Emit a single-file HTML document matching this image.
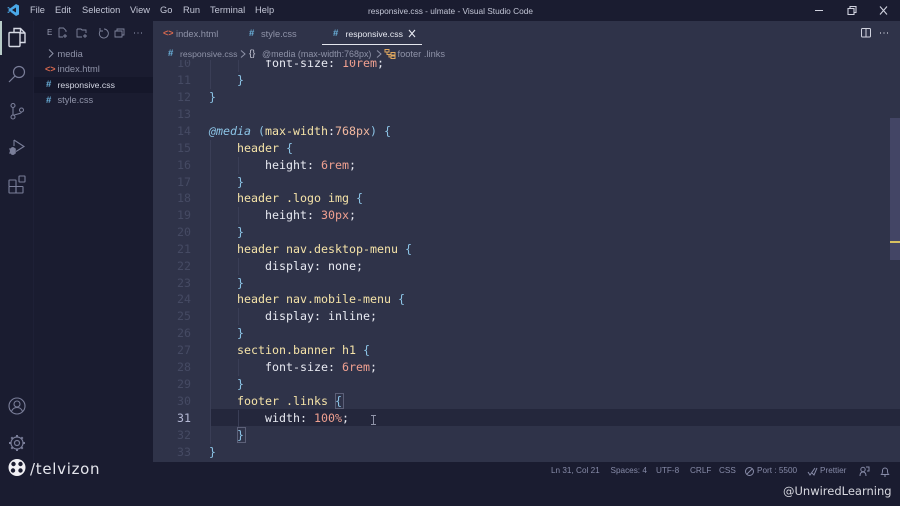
<!DOCTYPE html>
<html><head><meta charset="utf-8"><style>
html,body{margin:0;padding:0;width:900px;height:506px;overflow:hidden;background:#1a1c30}
*{box-sizing:border-box}
.a{position:absolute;white-space:pre}
body{font-family:"Liberation Sans",sans-serif;position:relative;filter:blur(.3px)}
.m{font-size:9.3px;color:#c3c6d6;top:5px}
.t{font-size:9.3px;color:#8f93a8}
.ln{position:absolute;left:0;width:38px;text-align:right;font:11.6px/17px "DejaVu Sans Mono",monospace;color:#454a63}
.c{position:absolute;left:56px;font:11.63px/17px "DejaVu Sans Mono",monospace;color:#e8eaf2;white-space:pre}
.y{color:#f5e3a8}.b{color:#8cc4e6}.r{color:#f0a090}.p{color:#f2b8a0}
.s{font-size:8.2px;color:#878ba8;top:466px}
svg{position:absolute;fill:none}
.g{position:absolute;width:1px;background:#3a3e56}
</style></head><body>
<div class="a" style="left:0;top:0;width:900px;height:21px;background:#1a1c30"></div>
<div class="a" style="left:153px;top:21px;width:747px;height:441px;background:#2f3349"></div>
<div class="a" style="left:33px;top:21px;width:1px;height:441px;background:#1e2036"></div>
<div class="a" style="left:34px;top:77px;width:119px;height:16px;background:#15172a"></div>
<div class="a" style="left:0;top:21px;width:2px;height:34px;background:#b8ccc8"></div>

<svg style="left:6px;top:3px" width="14" height="14" viewBox="0 0 14 14"><path d="M10 1 L13 2.5 V11.5 L10 13 L2 7 L10 1Z M10 4.5 L6 7 L10 9.5Z M1 5 L2.5 4 L5 6 M1 9 L2.5 10 L5 8" fill="#4aa8e8"/></svg>
<span class="a m" style="left:30px">File</span><span class="a m" style="left:55px">Edit</span><span class="a m" style="left:82px">Selection</span><span class="a m" style="left:130px">View</span><span class="a m" style="left:160px">Go</span><span class="a m" style="left:183px">Run</span><span class="a m" style="left:210px">Terminal</span><span class="a m" style="left:255px">Help</span>
<span class="a m" style="left:368px;font-size:8.3px;top:5.500px">responsive.css - ulmate - Visual Studio Code</span>
<svg style="left:815px;top:5px" width="80" height="11" viewBox="0 0 80 11" stroke="#d0d2de"><path d="M0 5.5H8"/><path d="M33 3.5h6v6h-6zM35 3.5V1.5h6v6h-2" stroke-width="1.1"/><path d="M65 1.5l7 8M72 1.5l-7 8" stroke-width="1.1"/></svg>

<svg style="left:7px;top:27px" width="20" height="21" viewBox="0 0 20 21" stroke="#d6d9e4" stroke-width="1.4"><path d="M7 5V1.5h6.5L18 6v9.500h-5M13.500 1.500V6H18"/><rect x="2" y="5.500" width="11" height="14" rx="1"/></svg>
<svg style="left:8px;top:65px" width="18" height="18" viewBox="0 0 18 18" stroke="#7a7e99" stroke-width="1.2"><circle cx="11" cy="7" r="5.500"/><path d="M7 11l-6 6"/></svg>
<svg style="left:9px;top:102px" width="16" height="18" viewBox="0 0 16 18" stroke="#7a7e99" stroke-width="1.1"><circle cx="4" cy="3.500" r="2"/><circle cx="4" cy="15" r="2"/><circle cx="12.500" cy="8" r="2"/><path d="M4 5.500V13M12.500 10c0 2-6 2-8 3.500"/></svg>
<svg style="left:8px;top:138px" width="18" height="19" viewBox="0 0 18 19" stroke="#7a7e99" stroke-width="1.1"><path d="M6 2l10 6.500L8 13.500M6 2v6"/><ellipse cx="4.800" cy="13" rx="2.500" ry="3.500" fill="#7a7e99"/><path d="M1 11h7M1 15h7"/></svg>
<svg style="left:8px;top:175px" width="18" height="19" viewBox="0 0 18 19" stroke="#7a7e99" stroke-width="1.1"><rect x="11" y="1" width="6" height="6" rx=".5"/><rect x="1" y="5" width="7" height="6.500" rx=".5"/><rect x="1" y="11.500" width="7" height="6.500" rx=".5"/><rect x="8" y="11.500" width="7" height="6.500" rx=".5"/></svg>
<svg style="left:8px;top:397px" width="18" height="18" viewBox="0 0 18 18" stroke="#7a7e99" stroke-width="1.1"><circle cx="9" cy="9" r="8"/><circle cx="9" cy="7" r="3"/><path d="M3.500 14.500c1-3 3.500-4 5.500-4s4.500 1 5.500 4"/></svg>
<svg style="left:8px;top:434px" width="18" height="18" viewBox="0 0 18 18" stroke="#7a7e99" stroke-width="1.2"><circle cx="9" cy="9" r="2.500"/><circle cx="9" cy="9" r="6"/><path d="M9 1v2.500M9 14.500V17M1 9h2.500M14.500 9H17M3.300 3.300l1.800 1.800M12.900 12.900l1.800 1.800M14.700 3.300l-1.800 1.800M5.100 12.900l-1.800 1.800" stroke-width="2"/></svg>

<span class="a" style="left:47px;top:28px;font-size:8px;color:#9a9db2">E</span>
<svg style="left:58px;top:27px" width="90" height="12" viewBox="0 0 90 12" stroke="#7f849c" stroke-width=".9"><path d="M1 1h4.500L8 3.500V5M1 1v9h4M7 7v4M5 9h4"/><path d="M19 2h4l1 1h4v3M19 2v8h5M27 7v4M25 9h4"/><path d="M46 2a4.500 4.500 0 1 1-3.500 1.500M42 1v3h3"/><path d="M57 4h7v6h-7zM59 4V2h7v6h-2"/><path d="M76 6h1M79.500 6h1M83 6h1" stroke-width="1.200"/></svg>

<svg style="left:47px;top:49px" width="8" height="9" viewBox="0 0 8 9" stroke="#8f93a8"><path d="M2 .5l4 4-4 4"/></svg>
<span class="a t" style="left:57.500px;top:48.500px">media</span>
<span class="a" style="left:45px;top:64px;font-size:9px;color:#d9694f;font-weight:bold">&lt;&gt;</span>
<span class="a t" style="left:57.500px;top:64px">index.html</span>
<span class="a" style="left:46px;top:79px;font-size:9.500px;color:#6cb4de;font-weight:bold">#</span>
<span class="a" style="left:57.500px;top:79.500px;font-size:8.700px;color:#d4d7e4">responsive.css</span>
<span class="a" style="left:46px;top:95px;font-size:9.500px;color:#6cb4de;font-weight:bold">#</span>
<span class="a t" style="left:57.500px;top:95px">style.css</span>

<span class="a" style="left:163px;top:28px;font-size:9px;color:#d9694f;font-weight:bold">&lt;&gt;</span>
<span class="a t" style="left:176px;top:28.500px">index.html</span>
<span class="a" style="left:249px;top:28px;font-size:9.500px;color:#6cb4de;font-weight:bold">#</span>
<span class="a t" style="left:261px;top:28.500px">style.css</span>
<span class="a" style="left:333px;top:28px;font-size:9.500px;color:#6cb4de;font-weight:bold">#</span>
<span class="a" style="left:345.500px;top:28.500px;font-size:8.700px;color:#e8eaf2">responsive.css</span>
<svg style="left:408px;top:29px" width="8" height="9" viewBox="0 0 8 9" stroke="#e8eaf2" stroke-width="1.100"><path d="M1 1l6 7M7 1l-6 7"/></svg>
<div class="a" style="left:322px;top:44px;width:100px;height:1px;background:#e4e6ee"></div>
<svg style="left:860px;top:27px" width="30" height="12" viewBox="0 0 30 12" stroke="#d0d2de"><rect x="1.500" y="1.500" width="9" height="8.500" rx="1"/><path d="M6 1.500V10"/><path d="M20 6h1M23.500 6h1M27 6h1" stroke-width="1.200"/></svg>

<span class="a" style="left:168px;top:48px;font-size:9.500px;color:#6cb4de;font-weight:bold">#</span>
<span class="a t" style="left:180px;top:48.500px;font-size:8.700px">responsive.css</span>
<svg style="left:240px;top:50px" width="6" height="8" viewBox="0 0 6 8" stroke="#8f93a8"><path d="M1 .5l4 3.500-4 3.500"/></svg>
<span class="a" style="left:249px;top:48px;font-size:9.500px;color:#c8cad8">{}</span>
<span class="a t" style="left:262px;top:48.500px;font-size:8.950px">@media (max-width:768px)</span>
<svg style="left:376px;top:50px" width="6" height="8" viewBox="0 0 6 8" stroke="#8f93a8"><path d="M1 .5l4 3.500-4 3.500"/></svg>
<svg style="left:384px;top:48px" width="12" height="11" viewBox="0 0 12 11" stroke="#e0a860"><path d="M1 1.500h4v2.500H1zM7 4.500h4V7H7zM7 8h4v2.500H7zM3 4v2.500h4M5 6.500V9h2"/></svg>
<span class="a t" style="left:397.500px;top:48.500px">footer .links</span>

<div style="position:absolute;left:153px;top:60px;width:747px;height:402px;overflow:hidden">
<div style="position:absolute;left:0;top:-60px;width:747px;height:522px">
<div class="a" style="left:57px;top:409px;width:690px;height:17px;background:#24273c"></div>
<div class="g" style="left:57px;top:140px;height:304px"></div>
<div class="g" style="left:85px;top:157px;height:17px"></div>
<div class="g" style="left:85px;top:207px;height:17px"></div>
<div class="g" style="left:85px;top:258px;height:17px"></div>
<div class="g" style="left:85px;top:308px;height:17px"></div>
<div class="g" style="left:85px;top:359px;height:17px"></div>
<div class="g" style="left:85px;top:410px;height:17px"></div>
<div class="g" style="left:85px;top:55px;height:17px"></div>
<div class="g" style="left:57px;top:55px;height:34px"></div>

<div class="ln" style="top:55px">10</div><div class="ln" style="top:72px">11</div><div class="ln" style="top:89px">12</div><div class="ln" style="top:106px">13</div><div class="ln" style="top:123px">14</div><div class="ln" style="top:140px">15</div><div class="ln" style="top:157px">16</div><div class="ln" style="top:174px">17</div><div class="ln" style="top:190px">18</div><div class="ln" style="top:207px">19</div><div class="ln" style="top:224px">20</div><div class="ln" style="top:241px">21</div><div class="ln" style="top:258px">22</div><div class="ln" style="top:275px">23</div><div class="ln" style="top:291px">24</div><div class="ln" style="top:308px">25</div><div class="ln" style="top:325px">26</div><div class="ln" style="top:342px">27</div><div class="ln" style="top:359px">28</div><div class="ln" style="top:376px">29</div><div class="ln" style="top:393px">30</div><div class="ln" style="top:410px;color:#b4b8d4">31</div><div class="ln" style="top:427px">32</div><div class="ln" style="top:444px">33</div>

<div class="c" style="top:55px">        font-size: <span class="r">10rem</span>;</div>
<div class="c" style="top:72px">    <span class="b">}</span></div>
<div class="c" style="top:89px"><span class="b">}</span></div>
<div class="c" style="top:123px"><i class="b">@media</i> <span class="b">(</span><span class="y">max-width</span>:<span class="p">768px</span><span class="b">)</span> <span class="b">{</span></div>
<div class="c" style="top:140px">    <span class="y">header</span> <span class="b">{</span></div>
<div class="c" style="top:157px">        height: <span class="r">6rem</span>;</div>
<div class="c" style="top:174px">    <span class="b">}</span></div>
<div class="c" style="top:190px">    <span class="y">header .logo img</span> <span class="b">{</span></div>
<div class="c" style="top:207px">        height: <span class="r">30px</span>;</div>
<div class="c" style="top:224px">    <span class="b">}</span></div>
<div class="c" style="top:241px">    <span class="y">header nav.desktop-menu</span> <span class="b">{</span></div>
<div class="c" style="top:258px">        display: none;</div>
<div class="c" style="top:275px">    <span class="b">}</span></div>
<div class="c" style="top:291px">    <span class="y">header nav.mobile-menu</span> <span class="b">{</span></div>
<div class="c" style="top:308px">        display: inline;</div>
<div class="c" style="top:325px">    <span class="b">}</span></div>
<div class="c" style="top:342px">    <span class="y">section.banner h1</span> <span class="b">{</span></div>
<div class="c" style="top:359px">        font-size: <span class="r">6rem</span>;</div>
<div class="c" style="top:376px">    <span class="b">}</span></div>
<div class="c" style="top:393px">    <span class="y">footer .links</span> <span class="b">{</span></div>
<div class="c" style="top:410px">        width: <span class="r">100%</span>;</div>
<div class="c" style="top:427px">    <span class="b">}</span></div>
<div class="c" style="top:444px"><span class="b">}</span></div>
<div class="a" style="left:182px;top:393px;width:9px;height:16px;border:1px solid #5c6078"></div>
<div class="a" style="left:84px;top:427px;width:9px;height:16px;border:1px solid #5c6078"></div>
</div></div>

<div class="a" style="left:890px;top:118px;width:10px;height:142px;background:#434565"></div>
<div class="a" style="left:890px;top:241px;width:10px;height:2px;background:#d8c060"></div>
<svg style="left:370px;top:415px" width="7" height="10" viewBox="0 0 7 10" stroke="#8f93a8"><path d="M1 .5h5M1 9.500h5M3.500 .5v9"/></svg>

<span class="a s" style="left:551px">Ln 31, Col 21</span><span class="a s" style="left:610.500px">Spaces: 4</span><span class="a s" style="left:656px">UTF-8</span><span class="a s" style="left:690px">CRLF</span><span class="a s" style="left:719px">CSS</span>
<svg style="left:744px;top:466px" width="11" height="11" viewBox="0 0 11 11" stroke="#878ba8"><circle cx="5.500" cy="5.500" r="4"/><path d="M2.500 8.500l6-6"/></svg>
<span class="a s" style="left:757px">Port : 5500</span>
<svg style="left:807px;top:467px" width="11" height="9" viewBox="0 0 11 9" stroke="#878ba8"><path d="M1 5l2 3 5-7M5 6l2 2 3-7"/></svg>
<span class="a s" style="left:820px">Prettier</span>
<svg style="left:859px;top:466px" width="11" height="11" viewBox="0 0 11 11" stroke="#878ba8"><circle cx="4" cy="3.500" r="2.200"/><path d="M1 10c0-3 1.500-4 3-4s3 1 3 4M7 1h3v4H8"/></svg>
<svg style="left:880px;top:466px" width="10" height="11" viewBox="0 0 10 11" stroke="#878ba8"><path d="M1.500 8.500c1-1 1-2 1-4a2.500 2.500 0 0 1 5 0c0 2 0 3 1 4zM4 10h2"/></svg>

<svg style="left:7px;top:458px" width="20" height="19" viewBox="0 0 20 19"><circle cx="10" cy="9.500" r="8.500" fill="#f0f0f4"/><circle cx="6.500" cy="6" r="2.200" fill="#1a1c30"/><circle cx="13.500" cy="6" r="2.200" fill="#1a1c30"/><circle cx="6" cy="12.500" r="2.200" fill="#1a1c30"/><circle cx="13.500" cy="12.500" r="2.200" fill="#1a1c30"/></svg>
<span class="a" style="left:30px;top:460px;font-size:15px;color:#e4e5ec;letter-spacing:.7px;font-family:'DejaVu Sans',sans-serif">/telvizon</span>
<span class="a" style="left:783px;top:484px;font-size:11.500px;color:#d8d9e0;font-family:'DejaVu Sans',sans-serif">@UnwiredLearning</span>
</body></html>
